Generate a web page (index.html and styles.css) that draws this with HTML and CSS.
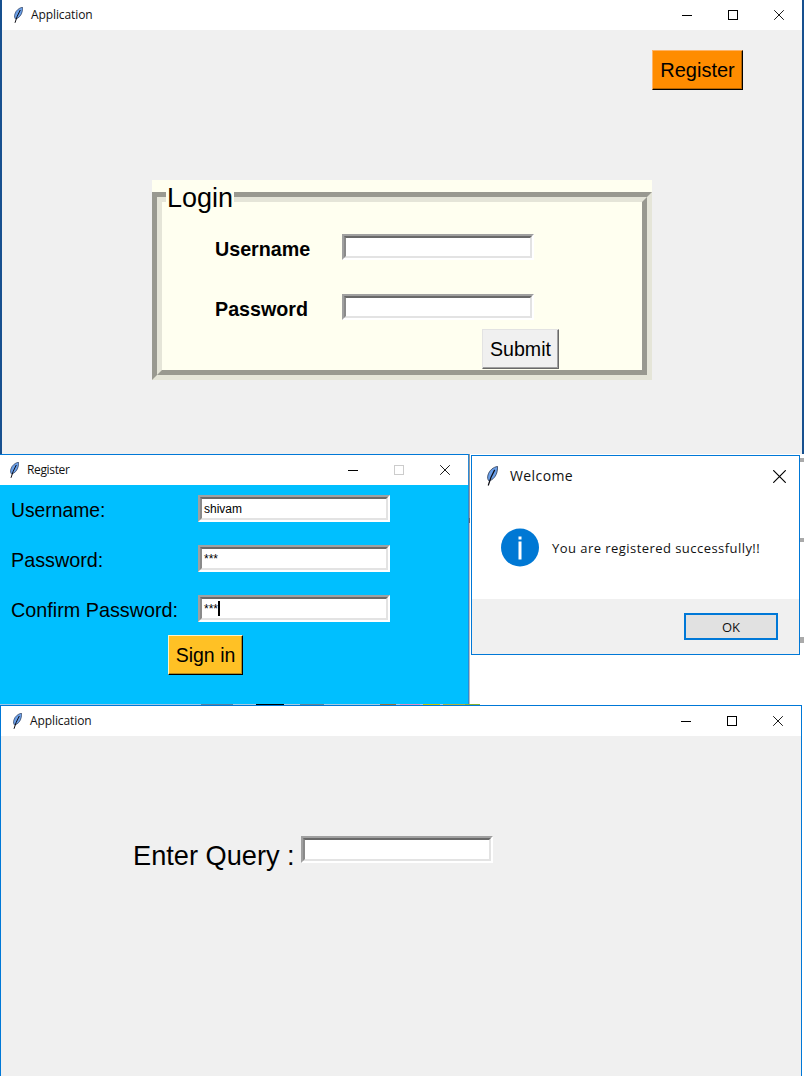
FILE: index.html
```html
<!DOCTYPE html>
<html lang="en">
<head>
<meta charset="utf-8">
<title>Application windows</title>
<link rel="stylesheet" href="styles.css">
</head>
<body>
<svg class="defs" width="0" height="0" aria-hidden="true">
  <symbol id="feather" viewBox="0 0 9 16">
    <path d="M8.700.2C5.200.6 1.900 3.400.8 7.200.2 9.300.5 11 1.600 12 4.900 11.300 7.600 8 8.300 4.200 8.500 2.900 8.700 1.500 8.700.2Z" fill="#6a9fe8" stroke="#1d2a44" stroke-width=".6"/>
    <path d="M6.300 3 3.200 9.300 1 15.800" fill="none" stroke="#0b0b12" stroke-width="1"/>
  </symbol>
  <symbol id="ic-min" viewBox="0 0 10 10"><path d="M0 5.500H10" stroke="currentColor" fill="none" shape-rendering="crispEdges"/></symbol>
  <symbol id="ic-max" viewBox="0 0 10 10"><rect x=".5" y=".5" width="9" height="9" stroke="currentColor" fill="none" shape-rendering="crispEdges"/></symbol>
  <symbol id="ic-close" viewBox="0 0 10 10"><path d="M.2.2 9.800 9.800M9.800.2.2 9.800" stroke="currentColor" fill="none" stroke-width=".9"/></symbol>
</svg>

<section class="win win-main">
  <header class="titlebar tb-main">
    <svg class="feather"><use href="#feather"/></svg>
    <span class="title">Application</span>
    <div class="controls">
      <span class="ctl"><svg class="ic"><use href="#ic-min"/></svg></span>
      <span class="ctl"><svg class="ic"><use href="#ic-max"/></svg></span>
      <span class="ctl"><svg class="ic"><use href="#ic-close"/></svg></span>
    </div>
  </header>
  <div class="main-body">
    <button class="btn btn-register">Register</button>
    <div class="login">
      <div class="groove-outer"><div class="groove-inner">
        <div class="login-grid">
          <label class="login-label">Username</label>
          <div class="entry"><div class="entry-in"></div></div>
          <label class="login-label">Password</label>
          <div class="entry"><div class="entry-in"></div></div>
        </div>
        <button class="btn btn-submit">Submit</button>
      </div></div>
      <span class="legend">Login</span>
    </div>
  </div>
</section>

<div class="row">
  <section class="win win-reg">
    <header class="titlebar tb-reg">
      <svg class="feather"><use href="#feather"/></svg>
      <span class="title">Register</span>
      <div class="controls">
        <span class="ctl"><svg class="ic"><use href="#ic-min"/></svg></span>
        <span class="ctl ctl-off"><svg class="ic"><use href="#ic-max"/></svg></span>
        <span class="ctl"><svg class="ic"><use href="#ic-close"/></svg></span>
      </div>
    </header>
    <div class="reg-body">
      <div class="reg-grid">
        <label class="reg-label reg-label-user">Username:</label>
        <div class="entry entry-tall"><div class="entry-in">shivam</div></div>
        <label class="reg-label">Password:</label>
        <div class="entry entry-tall"><div class="entry-in">***</div></div>
        <label class="reg-label">Confirm Password:</label>
        <div class="entry entry-tall"><div class="entry-in">***<span class="caret"></span></div></div>
      </div>
      <button class="btn btn-signin">Sign in</button>
    </div>
  </section>
  <div class="gap"></div>
  <section class="win win-dialog">
    <header class="dlg-title">
      <svg class="feather feather-lg"><use href="#feather"/></svg>
      <span class="dlg-name">Welcome</span>
      <svg class="ic ic-dlg-close"><use href="#ic-close"/></svg>
    </header>
    <div class="dlg-body">
      <svg class="info" viewBox="0 0 38 38" aria-hidden="true">
        <circle cx="19" cy="19" r="19" fill="#0078d4"/>
        <rect x="17.500" y="8" width="3" height="3" fill="#fff"/>
        <rect x="17.500" y="13" width="3" height="18" fill="#fff"/>
      </svg>
      <p class="dlg-msg">You are registered successfully!!</p>
    </div>
    <footer class="dlg-foot">
      <button class="btn-ok">OK</button>
    </footer>
  </section>
  <div class="edge"></div>
</div>
<div class="strip"></div>

<section class="win win-query">
  <header class="titlebar tb-query">
    <svg class="feather"><use href="#feather"/></svg>
    <span class="title">Application</span>
    <div class="controls">
      <span class="ctl"><svg class="ic"><use href="#ic-min"/></svg></span>
      <span class="ctl"><svg class="ic"><use href="#ic-max"/></svg></span>
      <span class="ctl"><svg class="ic"><use href="#ic-close"/></svg></span>
    </div>
  </header>
  <div class="query-body">
    <label class="query-label">Enter Query :</label>
    <div class="entry entry-tall"><div class="entry-in"></div></div>
  </div>
</section>
</body>
</html>
```
FILE: styles.css
```css
* { box-sizing: border-box; }
html, body { margin: 0; padding: 0; }
body {
  width: 804px;
  height: 1076px;
  overflow: hidden;
  background: #fff;
  font-family: "Liberation Sans", Arial, sans-serif;
  color: #000;
}
.defs { position: absolute; }

.win { display: flex; flex-direction: column; }
.win-main {
  height: 454px;
  border-left: 2px solid #17508f;
  border-right: 2px solid #17508f;
  background: #f0f0f0;
}
.titlebar {
  display: flex;
  align-items: center;
  height: 30px;
  flex: none;
  background: #fff;
}
.tb-main { padding-left: 12px; }
.tb-reg { padding-left: 10px; }
.tb-reg .title { letter-spacing: -0.35px; }
.tb-query { padding-left: 12px; }
.feather { width: 9px; height: 16px; flex: none; margin-top: -1px; }
.title {
  margin-left: 8px;
  font: 12px/16px "Open Sans", "Noto Sans", sans-serif;
  color: #111;
  letter-spacing: -0.1px;
}
.controls { display: flex; margin-left: auto; }
.ctl {
  width: 46px;
  height: 30px;
  display: flex;
  align-items: center;
  justify-content: center;
  color: #000;
}
.ctl-off { color: #ccc; }
.ic { width: 10px; height: 10px; display: block; }

/* Main window */
.main-body { padding: 20px 0 0 150px; display: flex; flex-direction: column; align-items: flex-start; }
.btn {
  padding: 0;
  height: 40px;
  font: 20px "Liberation Sans", Arial, sans-serif;
  color: #000;
  border: 1px solid;
  cursor: default;
}
.btn-register {
  width: 91px;
  margin-left: 500px;
  background: #ff8c00;
  border-color: #ffb366 #000 #000 #ffb366;
  box-shadow: inset -1px -1px 0 #b36200;
}
.login {
  position: relative;
  width: 500px;
  height: 200px;
  margin-top: 90px;
  padding-top: 12px;
  background: #fffff0;
}
.groove-outer {
  height: 188px;
  border: 5px solid;
  border-color: #999990 #e5e5d8 #e5e5d8 #999990;
}
.groove-inner {
  height: 178px;
  border: 5px solid;
  border-color: #e5e5d8 #999990 #999990 #e5e5d8;
}
.legend {
  position: absolute;
  left: 14px;
  top: 0;
  padding: 0 1px;
  font-size: 27px;
  line-height: 36px;
  background: #fffff0;
}
.login-grid {
  display: grid;
  grid-template-columns: 127px 192px;
  grid-auto-rows: 26px;
  row-gap: 34px;
  padding: 32px 0 0 53px;
  align-items: center;
}
.login-label { font-size: 19.7px; font-weight: 700; position: relative; top: 2px; }

.entry {
  width: 192px;
  height: 26px;
  flex: none;
  border: 2px solid;
  border-color: #a0a0a0 #fff #fff #a0a0a0;
  background: #fff;
}
.entry-tall { height: 27px; }
.entry-in {
  display: flex;
  align-items: center;
  height: 100%;
  padding-left: 2px;
  border: 2px solid;
  border-color: #696969 #e3e3e3 #e3e3e3 #8a8a8a;
  background: #fff;
  font-size: 12px;
}
.caret { width: 2px; height: 15px; background: #000; margin-left: 0; }
.btn-submit {
  display: block;
  width: 77px;
  margin: 9px 0 0 320px;
  background: #f0f0f0;
  border-color: #e3e3e3 #696969 #696969 #e3e3e3;
  box-shadow: inset -1px -1px 0 #a0a0a0;
  font-size: 19.6px;
}

/* Middle row */
.row { display: flex; height: 250px; align-items: flex-start; }
.win-reg {
  width: 469px;
  height: 250px;
  flex: none;
  border-top: 1px solid #0078d7;
  border-right: 1px solid #2a8ad8;
  background: #00bfff;
}
.reg-body { padding: 10px 0 0 11px; }
.reg-grid {
  display: grid;
  grid-template-columns: 187px 192px;
  grid-auto-rows: 27px;
  row-gap: 23px;
  align-items: center;
}
.reg-label { font-size: 19.8px; position: relative; top: 2px; white-space: nowrap; }
.reg-label-user { font-size: 19.3px; }
.btn-signin {
  display: block;
  width: 75px;
  margin: 13px 0 0 157px;
  background: #ffc125;
  border-color: #fff3c8 #000 #000 #fff3c8;
  box-shadow: inset -1px -1px 0 #b38a1a;
  font-size: 19.5px;
}
.gap {
  width: 2px;
  height: 250px;
  flex: none;
  background: linear-gradient(#999 0 64px, #666 64px 69px, #bbb 69px 200px) 0 0 / 1px 100% no-repeat;
}
.win-dialog {
  width: 329px;
  height: 200px;
  flex: none;
  margin-top: 1px;
  border: 1px solid #0078d7;
  background: #fff;
}
.dlg-title { display: flex; align-items: center; height: 40px; padding: 0 13px 0 15px; }
.feather-lg { width: 11px; height: 20px; margin-top: 0; }
.dlg-name {
  margin-left: 12px;
  font: 14px/20px "Open Sans", "Noto Sans", sans-serif;
  letter-spacing: 0.4px;
  color: #111;
}
.ic-dlg-close { width: 13px; height: 13px; margin-left: auto; }
.dlg-body { height: 103px; display: flex; align-items: flex-start; padding: 32px 0 0 29px; }
.info { width: 38px; height: 39px; flex: none; }
.dlg-msg {
  margin: 10px 0 0 13px;
  font: 13px/20px "Open Sans", "Noto Sans", sans-serif;
  letter-spacing: 0.45px;
  color: #111;
}
.dlg-foot {
  flex: 1;
  display: flex;
  justify-content: flex-end;
  padding: 14px 21px 0 0;
  background: #f0f0f0;
}
.btn-ok {
  width: 94px;
  height: 27px;
  padding: 0;
  border: 2px solid #0078d7;
  background: #e1e1e1;
  font: 13px "Open Sans", "Noto Sans", sans-serif;
  color: #111;
}
.edge {
  width: 4px;
  height: 200px;
  margin-left: auto;
  background: linear-gradient(#fff 0 4px, #aaa 4px 8px, #fff 8px 84px, #aaa 84px 88px, #fff 88px 183px, #aaa 183px 189px, #fff 189px);
}
.strip {
  height: 1px;
  width: 480px;
  background: linear-gradient(90deg,
    #9fc6e8 0 201px, #5f7f9f 201px 233px, #a9c8e0 233px 256px, #000 256px 284px,
    #a9c8e0 284px 300px, #6a8296 300px 324px, #a9c8e0 324px 380px, #a0703a 380px 396px,
    #b8c8d8 396px 400px, #e090c0 400px 420px, #b8c8d8 420px 423px, #d0c000 423px 440px,
    #b8c8d8 440px 443px, #b0b040 443px 465px, #8ab030 465px 480px);
}

/* Query window */
.win-query {
  width: 802px;
  height: 371px;
  border: 1px solid #0078d7;
  border-bottom: 0;
  background: #f0f0f0;
}
.query-body { display: flex; align-items: flex-start; padding: 100px 0 0 132px; }
.query-label { font-size: 27.2px; line-height: 31px; margin: 4px 6px 0 0; white-space: nowrap; }
```
